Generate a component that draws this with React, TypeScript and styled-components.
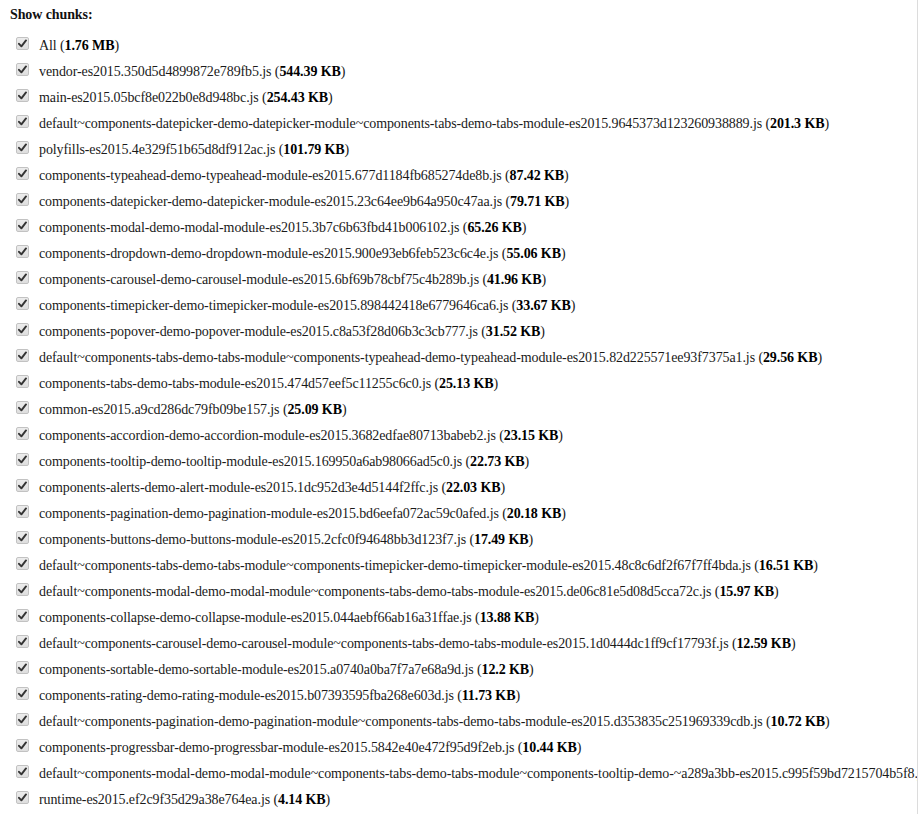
import React from 'react';
import styled, {createGlobalStyle} from 'styled-components';

type Chunk = {
  label: string;
  size: string;
};

const chunks: Chunk[] = [
  {label: 'All', size: '1.76 MB'},
  {label: 'vendor-es2015.350d5d4899872e789fb5.js', size: '544.39 KB'},
  {label: 'main-es2015.05bcf8e022b0e8d948bc.js', size: '254.43 KB'},
  {
    label:
      'default~components-datepicker-demo-datepicker-module~components-tabs-demo-tabs-module-es2015.9645373d123260938889.js',
    size: '201.3 KB',
  },
  {label: 'polyfills-es2015.4e329f51b65d8df912ac.js', size: '101.79 KB'},
  {label: 'components-typeahead-demo-typeahead-module-es2015.677d1184fb685274de8b.js', size: '87.42 KB'},
  {label: 'components-datepicker-demo-datepicker-module-es2015.23c64ee9b64a950c47aa.js', size: '79.71 KB'},
  {label: 'components-modal-demo-modal-module-es2015.3b7c6b63fbd41b006102.js', size: '65.26 KB'},
  {label: 'components-dropdown-demo-dropdown-module-es2015.900e93eb6feb523c6c4e.js', size: '55.06 KB'},
  {label: 'components-carousel-demo-carousel-module-es2015.6bf69b78cbf75c4b289b.js', size: '41.96 KB'},
  {label: 'components-timepicker-demo-timepicker-module-es2015.898442418e6779646ca6.js', size: '33.67 KB'},
  {label: 'components-popover-demo-popover-module-es2015.c8a53f28d06b3c3cb777.js', size: '31.52 KB'},
  {
    label:
      'default~components-tabs-demo-tabs-module~components-typeahead-demo-typeahead-module-es2015.82d225571ee93f7375a1.js',
    size: '29.56 KB',
  },
  {label: 'components-tabs-demo-tabs-module-es2015.474d57eef5c11255c6c0.js', size: '25.13 KB'},
  {label: 'common-es2015.a9cd286dc79fb09be157.js', size: '25.09 KB'},
  {label: 'components-accordion-demo-accordion-module-es2015.3682edfae80713babeb2.js', size: '23.15 KB'},
  {label: 'components-tooltip-demo-tooltip-module-es2015.169950a6ab98066ad5c0.js', size: '22.73 KB'},
  {label: 'components-alerts-demo-alert-module-es2015.1dc952d3e4d5144f2ffc.js', size: '22.03 KB'},
  {label: 'components-pagination-demo-pagination-module-es2015.bd6eefa072ac59c0afed.js', size: '20.18 KB'},
  {label: 'components-buttons-demo-buttons-module-es2015.2cfc0f94648bb3d123f7.js', size: '17.49 KB'},
  {
    label:
      'default~components-tabs-demo-tabs-module~components-timepicker-demo-timepicker-module-es2015.48c8c6df2f67f7ff4bda.js',
    size: '16.51 KB',
  },
  {
    label:
      'default~components-modal-demo-modal-module~components-tabs-demo-tabs-module-es2015.de06c81e5d08d5cca72c.js',
    size: '15.97 KB',
  },
  {label: 'components-collapse-demo-collapse-module-es2015.044aebf66ab16a31ffae.js', size: '13.88 KB'},
  {
    label:
      'default~components-carousel-demo-carousel-module~components-tabs-demo-tabs-module-es2015.1d0444dc1ff9cf17793f.js',
    size: '12.59 KB',
  },
  {label: 'components-sortable-demo-sortable-module-es2015.a0740a0ba7f7a7e68a9d.js', size: '12.2 KB'},
  {label: 'components-rating-demo-rating-module-es2015.b07393595fba268e603d.js', size: '11.73 KB'},
  {
    label:
      'default~components-pagination-demo-pagination-module~components-tabs-demo-tabs-module-es2015.d353835c251969339cdb.js',
    size: '10.72 KB',
  },
  {label: 'components-progressbar-demo-progressbar-module-es2015.5842e40e472f95d9f2eb.js', size: '10.44 KB'},
  {
    label:
      'default~components-modal-demo-modal-module~components-tabs-demo-tabs-module~components-tooltip-demo-~a289a3bb-es2015.c995f59bd7215704b5f8.js',
    size: '9.87 KB',
  },
  {label: 'runtime-es2015.ef2c9f35d29a38e764ea.js', size: '4.14 KB'},
];

const GlobalStyle = createGlobalStyle`
  html, body {
    margin: 0;
    padding: 0;
    background: #fff;
  }
`;

const Sidebar = styled.div`
  box-sizing: border-box;
  width: 918px;
  height: 814px;
  padding: 7px 0 0 10px;
  border-right: 1px solid #dcdcdc;
  overflow: hidden;
  font-family: 'Liberation Serif', 'Times New Roman', serif;
  font-size: 14px;
  line-height: 16px;
  letter-spacing: -0.1px;
  color: #1a1a1a;
`;

const Title = styled.div`
  font-weight: bold;
  color: #111;
  margin-bottom: 10px;
`;

const Row = styled.label`
  display: flex;
  align-items: flex-start;
  height: 26px;
  padding-top: 5px;
  box-sizing: border-box;
  white-space: nowrap;
  cursor: pointer;
`;

const Box = styled.span`
  flex: none;
  box-sizing: border-box;
  width: 13px;
  height: 13px;
  margin: -1px 10px 0 6px;
  border: 1px solid #c2c2c2;
  border-radius: 2px;
  background: linear-gradient(#ececec, #dedede);
  display: flex;
  align-items: center;
  justify-content: center;
`;

const Size = styled.b`
  color: #000;
`;

const Check = () => (
  <svg width="9" height="9" viewBox="0 0 9 9">
    <path d="M1 4.8 L3.4 7.3 L8 1.4" fill="none" stroke="#333" strokeWidth="1.9" strokeLinecap="round" strokeLinejoin="round" />
  </svg>
);

const App = (): JSX.Element => {
  return (
    <>
      <GlobalStyle />
      <Sidebar>
        <Title>Show chunks:</Title>
        {chunks.map(chunk => (
          <Row key={chunk.label}>
            <Box>
              <Check />
            </Box>
            <span>
              {chunk.label} (<Size>{chunk.size}</Size>)
            </span>
          </Row>
        ))}
      </Sidebar>
    </>
  );
};

export default App;
